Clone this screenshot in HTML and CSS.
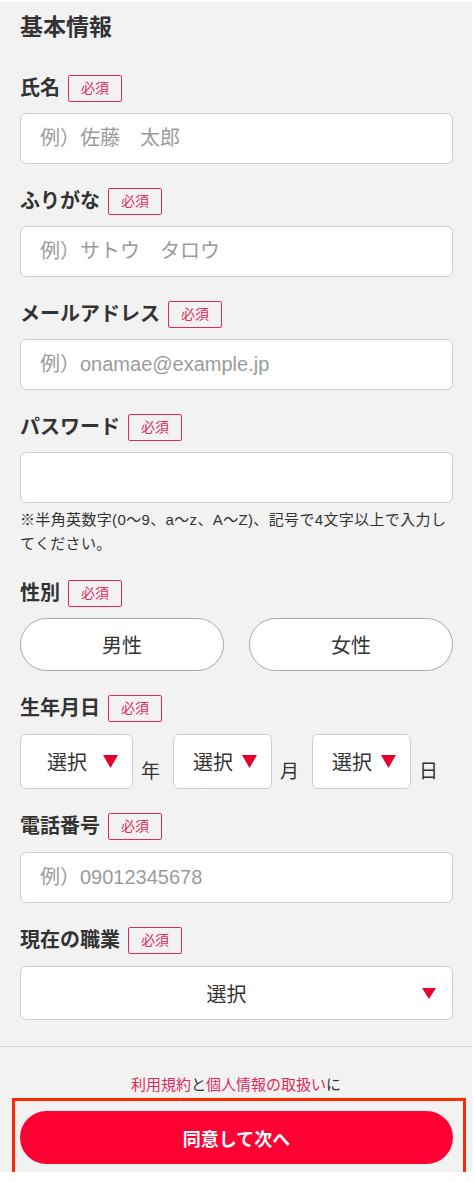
FILE: index.html
```html
<!DOCTYPE html>
<html lang="ja">
<head>
<meta charset="utf-8">
<title>基本情報</title>
<link rel="stylesheet" href="styles.css">
</head>
<body>
<div class="page">
  <section class="form">
    <h2 class="heading">基本情報</h2>

    <div class="field field-first">
      <div class="label-row"><span class="label">氏名</span><span class="badge">必須</span></div>
      <input class="text-input" type="text" placeholder="例）佐藤　太郎">
    </div>

    <div class="field">
      <div class="label-row"><span class="label">ふりがな</span><span class="badge">必須</span></div>
      <input class="text-input" type="text" placeholder="例）サトウ　タロウ">
    </div>

    <div class="field">
      <div class="label-row"><span class="label">メールアドレス</span><span class="badge">必須</span></div>
      <input class="text-input" type="email" placeholder="例）onamae@example.jp">
    </div>

    <div class="field">
      <div class="label-row"><span class="label">パスワード</span><span class="badge">必須</span></div>
      <input class="text-input" type="password">
      <p class="note">※半角英数字(0〜9、a〜z、A〜Z)、記号で4文字以上で入力してください。</p>
    </div>

    <div class="field">
      <div class="label-row"><span class="label">性別</span><span class="badge">必須</span></div>
      <div class="gender">
        <button class="pill" type="button">男性</button>
        <button class="pill" type="button">女性</button>
      </div>
    </div>

    <div class="field">
      <div class="label-row label-row-loose"><span class="label">生年月日</span><span class="badge">必須</span></div>
      <div class="date-row">
        <div class="select select-year"><span>選択</span><svg class="tri" viewBox="0 0 15 13" width="15" height="13"><polygon points="0,0 15,0 7.5,13"/></svg></div>
        <span class="unit">年</span>
        <div class="select select-md"><span>選択</span><svg class="tri" viewBox="0 0 15 13" width="15" height="13"><polygon points="0,0 15,0 7.5,13"/></svg></div>
        <span class="unit">月</span>
        <div class="select select-md"><span>選択</span><svg class="tri" viewBox="0 0 15 13" width="15" height="13"><polygon points="0,0 15,0 7.5,13"/></svg></div>
        <span class="unit">日</span>
      </div>
    </div>

    <div class="field">
      <div class="label-row label-row-loose"><span class="label">電話番号</span><span class="badge">必須</span></div>
      <input class="text-input" type="tel" placeholder="例）09012345678">
    </div>

    <div class="field">
      <div class="label-row label-row-loose"><span class="label">現在の職業</span><span class="badge">必須</span></div>
      <div class="select select-wide"><span class="select-text">選択</span><svg class="tri" viewBox="0 0 14 11" width="14" height="11"><polygon points="0,0 14,0 7,11"/></svg></div>
    </div>
  </section>

  <section class="agree">
    <p class="agree-text"><a class="link" href="#">利用規約</a>と<a class="link" href="#">個人情報の取扱い</a>に</p>
    <div class="submit-wrap"><button class="submit" type="button">同意して次へ</button></div>
  </section>
</div>
</body>
</html>
```

FILE: styles.css
```css
html, body {
  margin: 0;
  padding: 0;
  background: #ffffff;
}

body {
  font-family: "Liberation Sans", "Noto Sans CJK JP", sans-serif;
  color: #333333;
}

.page {
  margin-top: 2px;
  width: 472px;
  background: #f2f2f2;
}

.form {
  padding: 10px 19px 26px 20px;
  border-bottom: 1px solid #d6d6d6;
}

.heading {
  margin: 0;
  font-size: 23px;
  line-height: 30px;
  font-weight: 700;
}

.field {
  margin-top: 24px;
}

.field-first {
  margin-top: 33px;
}

.label-row {
  display: flex;
  align-items: center;
  gap: 8px;
  height: 26px;
  margin-bottom: 12px;
}

.label-row-loose {
  margin-bottom: 13px;
}

.label {
  font-size: 20px;
  font-weight: 700;
  line-height: 26px;
}

.badge {
  box-sizing: border-box;
  height: 27px;
  padding: 0 12px;
  border: 1.5px solid #e02a5a;
  border-radius: 2px;
  color: #e02a5a;
  font-size: 14px;
  line-height: 24px;
}

.text-input {
  display: block;
  box-sizing: border-box;
  width: 100%;
  height: 51px;
  margin: 0;
  padding: 0 19px;
  border: 1px solid #cfcfcf;
  border-radius: 6px;
  background: #ffffff;
  font-family: inherit;
  font-size: 20px;
  color: #333333;
  outline: none;
}

.text-input::placeholder {
  color: #9b9b9b;
}

.note {
  margin: 5px 0 0;
  font-size: 15px;
  line-height: 24px;
  letter-spacing: 0.35px;
}

.gender {
  display: grid;
  grid-template-columns: 1fr 1fr;
  gap: 25px;
}

.pill {
  height: 53px;
  margin: 0;
  border: 1px solid #a8a8a8;
  border-radius: 27px;
  background: #ffffff;
  font-family: inherit;
  font-size: 20px;
  color: #333333;
}

.date-row {
  display: flex;
  align-items: flex-end;
}

.select {
  box-sizing: border-box;
  height: 55px;
  display: flex;
  align-items: center;
  justify-content: space-between;
  background: #ffffff;
  border: 1px solid #cfcfcf;
  border-radius: 6px;
  font-size: 20px;
  color: #333333;
}

.select-year {
  width: 113px;
  padding: 0 14px 0 26px;
}

.select-md {
  width: 99px;
  padding: 0 14px 0 19px;
}

.unit {
  font-size: 19px;
  line-height: 24px;
  margin: 0 13px 5px 8px;
}

.unit:last-child {
  margin-right: 0;
}

.select-wide {
  width: 100%;
  height: 54px;
  padding: 0 16px 0 20px;
  gap: 10px;
}

.select-text {
  flex: 1;
  text-align: center;
}

.tri {
  display: block;
  fill: #e8002d;
}

.agree {
  padding: 26px 0 8px;
}

.agree-text {
  margin: 0;
  text-align: center;
  font-size: 15px;
  line-height: 24px;
}

.link {
  color: #e02a5a;
  text-decoration: none;
}

.submit-wrap {
  position: relative;
  margin: 14px 19px 0 20px;
}

.submit {
  display: block;
  width: 100%;
  height: 53px;
  margin: 0;
  border: 0;
  border-radius: 27px;
  background: #ff0033;
  color: #ffffff;
  font-family: inherit;
  font-size: 18px;
  font-weight: 700;
}

.submit-wrap::after {
  content: "";
  position: absolute;
  left: -8px;
  right: -13px;
  top: -13px;
  bottom: -18px;
  border: 3px solid #ff2a00;
  pointer-events: none;
}
```
